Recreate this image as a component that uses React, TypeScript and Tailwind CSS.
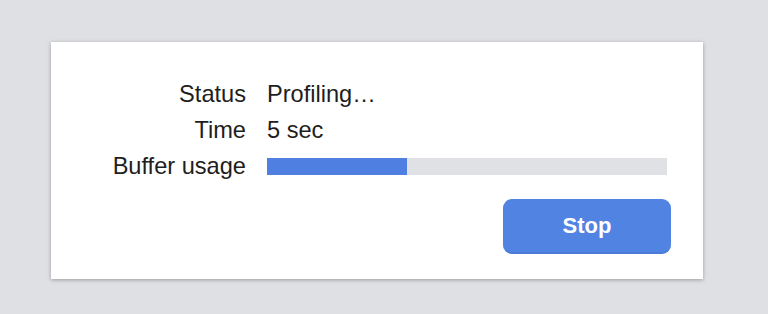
import React from "react";

const rows = [
  { label: "Status", value: "Profiling…" },
  { label: "Time", value: "5 sec" },
];

export default function App() {
  const usage = 35;
  return (
    <div
      className="w-full h-[314px] bg-[#dfe0e4] pt-[42px] pl-[51px]"
      style={{ fontFamily: '"Liberation Sans", Arial, sans-serif' }}
    >
      <div className="w-[652px] h-[237px] bg-white shadow-[0_1px_4px_rgba(0,0,0,0.3)] pt-[34px] pl-[45px] pr-[32px]">
        <div className="grid grid-cols-[150px_400px] gap-x-[21px] text-[23.6px] leading-[36px] text-[#1e1e20]">
          {rows.map((r) => (
            <React.Fragment key={r.label}>
              <div className="text-right">{r.label}</div>
              <div>{r.value}</div>
            </React.Fragment>
          ))}
          <div className="text-right whitespace-nowrap">Buffer usage</div>
          <div className="flex items-center">
            <div className="w-full h-[17px] bg-[#e0e1e5]">
              <div className="h-full bg-[#4f80e1]" style={{ width: `${usage}%` }} />
            </div>
          </div>
        </div>
        <div className="flex justify-end mt-[15px]">
          <button className="w-[168px] h-[55px] rounded-[9px] bg-[#5183e3] border-b-2 border-[#4a7bd9] text-white text-[22px] font-bold">
            Stop
          </button>
        </div>
      </div>
    </div>
  );
}
